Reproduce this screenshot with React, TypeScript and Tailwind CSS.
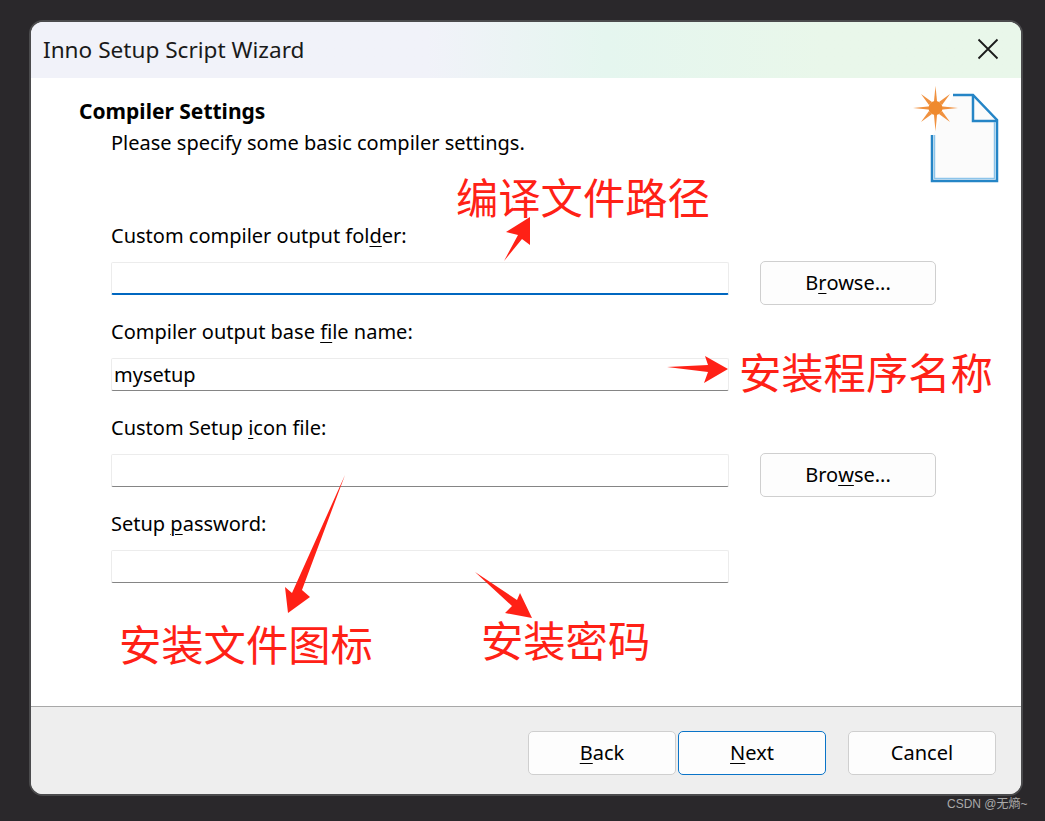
const uiFont = { fontFamily: '"Noto Sans", "Open Sans", sans-serif' };
const noteFont = { fontFamily: '"Noto Sans CJK SC", sans-serif' };

function Key({ children }: { children: string }) {
  return <span className="underline decoration-1 underline-offset-[3px]">{children}</span>;
}

function Button({ children, focused, className = "" }: { children: React.ReactNode; focused?: boolean; className?: string }) {
  return (
    <button
      className={`flex h-[44px] w-[148px] shrink-0 items-center justify-center rounded-[5px] border bg-[#fdfdfd] text-[20px] text-black ${
        focused ? "border-[#0a74c8]" : "border-[#cfcfcf]"
      } ${className}`}
    >
      {children}
    </button>
  );
}

function Field({ label, value, focused, browse }: { label: React.ReactNode; value?: string; focused?: boolean; browse?: React.ReactNode }) {
  return (
    <div className="h-[96px]">
      <div className="mb-[15px] h-[23px] pt-px text-[20px] leading-[22px] text-black">{label}</div>
      <div className="flex items-start gap-[31px]">
        <div
          className={`flex h-[33px] w-[618px] items-center rounded-[2px] border border-[#ececec] bg-white pl-[2px] text-[20px] text-black ${
            focused ? "border-b-2 border-b-[#0067c0]" : "border-b-[#858585]"
          }`}
        >
          {value}
        </div>
        {browse && (
          <Button className="-mt-px w-[176px]">{browse}</Button>
        )}
      </div>
    </div>
  );
}

function WizardIcon() {
  return (
    <svg width="90" height="100" viewBox="913 85 90 100" className="shrink-0">
      <path d="M953 96.500H973L996.500 120.500V180.500H932.500V135" fill="#fbfbfb" stroke="none" />
      <path d="M932 135V181H997V120L973 95H953" fill="none" stroke="#2585c6" strokeWidth="2.500" />
      <path d="M973 96V121H997" fill="none" stroke="#2585c6" strokeWidth="2.500" />
      <path d="M934.500 135V178.500H994.500V122" fill="none" stroke="#8cc4ea" strokeWidth="1.500" />
      <g fill="#f0913f">
        <path d="M913 108L933 106V110Z" />
        <path d="M958 108L938 106V110Z" />
        <path d="M935.500 86L933.500 106H937.500Z" />
        <path d="M935.500 131L933.500 110H937.500Z" />
        <path d="M921 94L932 102L929 105Z" />
        <path d="M950 94L939 102L942 105Z" />
        <path d="M921 122L932 114L929 111Z" />
        <path d="M950 122L939 114L942 111Z" />
      </g>
      <circle cx="935.500" cy="108" r="7" fill="#ef8a2e" />
    </svg>
  );
}

function Annotations() {
  return (
    <div className="pointer-events-none absolute inset-0 text-[42.300px] leading-[50px] text-[#ff2116]" style={noteFont}>
      <span className="absolute left-[456px] top-[171px]">编译文件路径</span>
      <span className="absolute left-[739px] top-[346px]">安装程序名称</span>
      <span className="absolute left-[119px] top-[618px]">安装文件图标</span>
      <span className="absolute left-[481px] top-[614px]">安装密码</span>
      <svg width="1045" height="821" viewBox="0 0 1045 821" className="absolute left-0 top-0" fill="#ff2116">
        <path d="M504 261L518 235L506 232L530 217L530 245L522 239Z" />
        <path d="M667 367L708 365L705 356L728 369L704 383L708 372Z" />
        <path d="M345 475L302 590L310 597L288 613L285 587L292 593Z" />
        <path d="M475 572L517 600L520 593L532 618L505 613L512 606Z" />
      </svg>
    </div>
  );
}

export default function App() {
  return (
    <div className="relative h-[821px] w-[1045px] overflow-hidden bg-[#2a282b] pl-[29px] pt-[20px]" style={uiFont}>
      <div className="flex h-[776px] w-[994px] flex-col overflow-hidden rounded-[14px] border-2 border-[#4b4b4d] bg-white">
        <div className="flex h-[56px] shrink-0 items-center justify-between bg-gradient-to-r from-[#f1f2f9] from-40% via-[#e5f6ef] via-58% to-[#e9f7ea] to-80% pl-[12px] pr-[22px]">
          <span className="text-[22.600px] text-[#1a1a1a]">Inno Setup Script Wizard</span>
          <svg width="22" height="22" viewBox="0 0 22 22" fill="none" stroke="#1a1a1a" strokeWidth="1.800" className="-mt-[2px]">
            <path d="M1.500 1.500L20.500 20.500M20.500 1.500L1.500 20.500" />
          </svg>
        </div>
        <div className="flex h-[628px] shrink-0 flex-col">
          <div className="flex h-[146px] shrink-0 items-start justify-between pl-[48px] pr-[18px] pt-[7px]">
            <div className="pt-[15px] text-[20px] leading-[22px] text-black">
              <div className="text-[21px] font-bold">Compiler Settings</div>
              <div className="mt-[10px] pl-[32px]">Please specify some basic compiler settings.</div>
            </div>
            <WizardIcon />
          </div>
          <div className="pl-[80px]">
            <Field
              focused
              label={<>Custom compiler output fol<Key>d</Key>er:</>}
              browse={<>B<Key>r</Key>owse...</>}
            />
            <Field label={<>Compiler output base <Key>f</Key>ile name:</>} value="mysetup" />
            <Field
              label={<>Custom Setup <Key>i</Key>con file:</>}
              browse={<>Bro<Key>w</Key>se...</>}
            />
            <Field label={<>Setup <Key>p</Key>assword:</>} />
          </div>
        </div>
        <div className="flex flex-1 items-start border-t border-[#a8a8a8] bg-[#eeeeee] pl-[497px] pt-[24px]">
          <Button><Key>B</Key>ack</Button>
          <Button focused className="ml-[2px]"><Key>N</Key>ext</Button>
          <Button className="ml-[22px]">Cancel</Button>
        </div>
      </div>
      <Annotations />
      <span className="absolute left-[947px] top-[796px] text-[12px] leading-[17px] text-[#a9a9a9]" style={{ fontFamily: '"Liberation Sans", "Noto Sans CJK SC", sans-serif' }}>
        CSDN @无熵~
      </span>
    </div>
  );
}
